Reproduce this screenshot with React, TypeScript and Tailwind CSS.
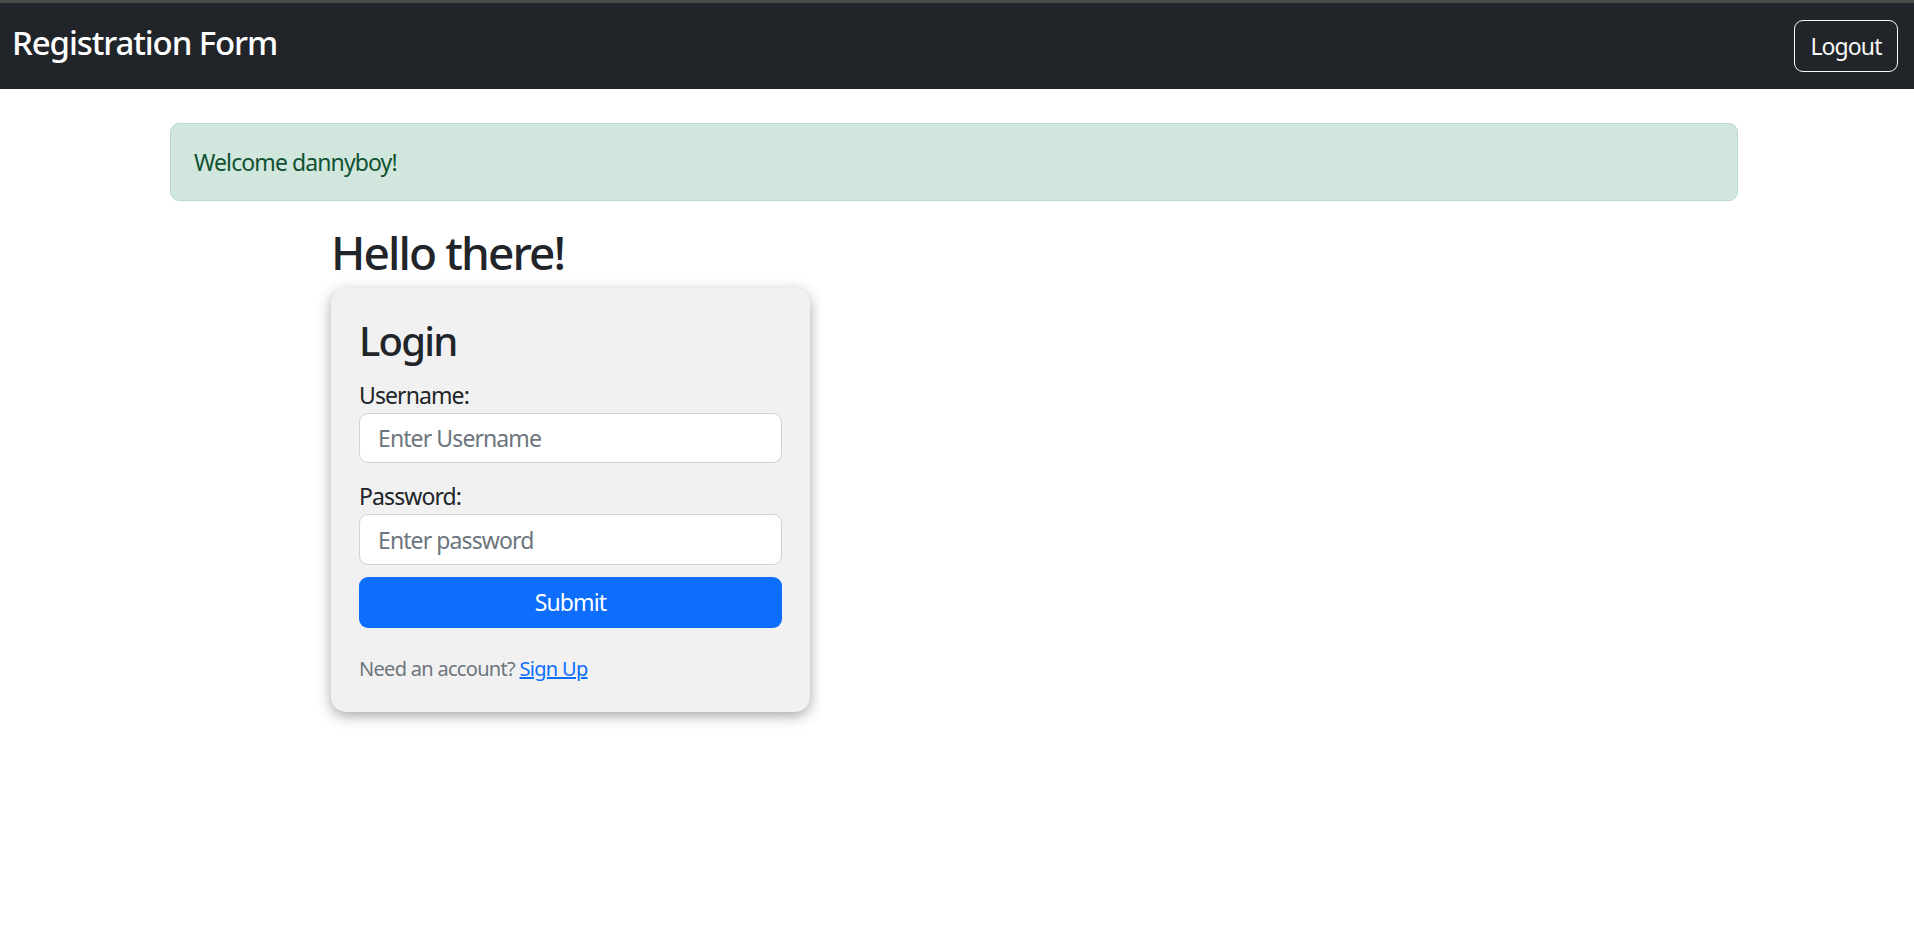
export default function App() {
  return (
    <div className="min-h-[929px] bg-white font-['Noto_Sans','Open_Sans',sans-serif] text-[#212529]">
      {/* navbar */}
      <nav className="flex h-[89px] items-center justify-between border-t-[3px] border-[#4b4b4b] bg-[#212529] pl-[12px] pr-[16px]">
        <span className="pb-[6px] text-[33px] font-medium tracking-[-1.1px] text-white">Registration Form</span>
        <button
          type="button"
          className="h-[52px] w-[104px] rounded-[9px] border border-[#f8f9fa] text-[23px] tracking-[-0.9px] text-[#f8f9fa]"
        >
          Logout
        </button>
      </nav>

      <div className="ml-[170px] w-[1568px] pt-[34px]">
        {/* alert */}
        <div className="flex h-[78px] items-center rounded-[9px] border border-[#badbcc] bg-[#d1e7dd] px-[23px] text-[23px] tracking-[-0.9px] text-[#0f5132]">
          Welcome dannyboy!
        </div>
      </div>

      <div className="ml-[331px] w-[479px] pt-[22px]">
        <h2 className="mb-[7px] h-[58px] text-[46px] font-medium leading-[58px] tracking-[-1.9px]">Hello there!</h2>

        {/* login card */}
        <div className="rounded-[15px] bg-[#f1f1f1] p-[28px] shadow-[0_4px_14px_rgba(0,0,0,0.35)]">
          <h3 className="mb-[11px] h-[50px] text-[40px] font-medium leading-[50px] tracking-[-1.8px]">Login</h3>
          <form className="flex flex-col" onSubmit={(e) => e.preventDefault()}>
            <label className="text-[23px] leading-[36px] tracking-[-0.9px]">Username:</label>
            <input
              type="text"
              placeholder="Enter Username"
              className="h-[50px] rounded-[9px] border border-[#ced4da] bg-white px-[18px] text-[23px] tracking-[-0.9px] outline-none placeholder:text-[#6c757d]"
            />
            <label className="mt-[15px] text-[23px] leading-[36px] tracking-[-0.9px]">Password:</label>
            <input
              type="password"
              placeholder="Enter password"
              className="h-[51px] rounded-[9px] border border-[#ced4da] bg-white px-[18px] text-[23px] tracking-[-0.9px] outline-none placeholder:text-[#6c757d]"
            />
            <button
              type="submit"
              className="mt-[12px] h-[51px] rounded-[9px] bg-[#0d6efd] text-[23px] tracking-[-0.9px] text-white"
            >
              Submit
            </button>
          </form>
          <p className="mt-[25px] text-[20px] leading-[31px] tracking-[-0.7px] text-[#6c757d]">
            Need an account?{" "}
            <a href="#" className="text-[#0d6efd] underline">
              Sign Up
            </a>
          </p>
        </div>
      </div>
    </div>
  );
}
